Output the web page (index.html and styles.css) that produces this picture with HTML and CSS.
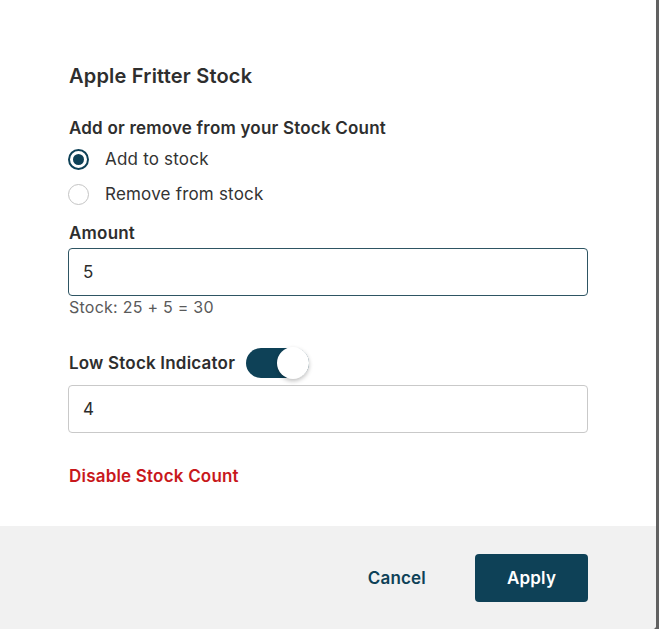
FILE: index.html
```html
<!DOCTYPE html>
<html>
<head>
<meta charset="utf-8">
<link rel="stylesheet" href="styles.css">
</head>
<body>
<div class="modal">
  <div class="content">
    <h2 class="title">Apple Fritter Stock</h2>
    <div class="group-label">Add or remove from your Stock Count</div>
    <div class="radios">
      <label class="radio"><span class="dot checked"></span><span>Add to stock</span></label>
      <label class="radio"><span class="dot"></span><span>Remove from stock</span></label>
    </div>
    <div class="field-label">Amount</div>
    <div class="input focused">5</div>
    <div class="hint">Stock: 25 + 5 = 30</div>
    <div class="toggle-row">
      <span class="field-label inline">Low Stock Indicator</span>
      <span class="toggle"><span class="knob"></span></span>
    </div>
    <div class="input">4</div>
    <div class="danger">Disable Stock Count</div>
  </div>
  <div class="footer">
    <span class="cancel">Cancel</span>
    <span class="apply">Apply</span>
  </div>
</div>
</body>
</html>
```
FILE: styles.css
```css
* { box-sizing: border-box; }
html, body { margin: 0; padding: 0; }
body {
  background: #616161;
  font-family: Inter, "Liberation Sans", sans-serif;
  color: #2b2b2b;
  width: 659px;
  height: 629px;
  overflow: hidden;
}
.modal {
  width: 656px;
  height: 629px;
  background: #fff;
  display: flex;
  flex-direction: column;
  border-bottom-right-radius: 4px;
  overflow: hidden;
}
.content {
  flex: 1;
  padding: 64px 68px 0 69px;
  display: flex;
  flex-direction: column;
}
.title {
  margin: 0;
  font-size: 20px;
  line-height: 24px;
  font-weight: 600;
  letter-spacing: 0.2px;
  color: #2e2e2e;
}
.group-label {
  margin-top: 28px;
  font-size: 17px;
  line-height: 24px;
  font-weight: 600;
  letter-spacing: 0.2px;
  color: #2e2e2e;
}
.radios {
  margin-top: 7px;
  display: flex;
  flex-direction: column;
  gap: 11px;
}
.radio {
  display: flex;
  align-items: center;
  gap: 16px;
  height: 24px;
  font-size: 17px;
  letter-spacing: 0.2px;
  color: #333;
  margin-left: -1px;
}
.dot {
  width: 21px;
  height: 21px;
  border-radius: 50%;
  border: 1.5px solid #c4c4c4;
  display: flex;
  align-items: center;
  justify-content: center;
}
.dot.checked {
  border: 2px solid #0e4157;
}
.dot.checked::after {
  content: "";
  width: 11px;
  height: 11px;
  border-radius: 50%;
  background: #0e4157;
}
.field-label {
  margin-top: 15px;
  font-size: 17px;
  line-height: 24px;
  font-weight: 600;
  letter-spacing: 0.2px;
  color: #2e2e2e;
}
.field-label.inline { margin-top: 0; }
.input {
  margin-top: 3px;
  margin-left: -1px;
  height: 48px;
  width: 520px;
  border: 1px solid #c9c9c9;
  border-radius: 4px;
  padding: 0 14px;
  display: flex;
  align-items: center;
  font-size: 17px;
  color: #2b2b2b;
}
.input.focused {
  border-color: #2e5563;
}
.hint {
  margin-top: 1px;
  font-size: 16px;
  line-height: 20px;
  letter-spacing: 0.25px;
  color: #5a5a5a;
}
.toggle-row {
  margin-top: 30px;
  display: flex;
  align-items: center;
  gap: 11px;
  height: 32px;
}
.toggle-row + .input { margin-top: 6px; }
.toggle {
  position: relative;
  width: 63px;
  height: 30px;
  border-radius: 15px;
  background: #0e4157;
}
.knob {
  position: absolute;
  right: 0;
  top: -1px;
  width: 32px;
  height: 32px;
  border-radius: 50%;
  background: #fff;
  box-shadow: 0 2px 4px rgba(0,0,0,0.25);
}
.danger {
  margin-top: 31px;
  font-size: 17px;
  line-height: 24px;
  font-weight: 600;
  letter-spacing: 0.2px;
  color: #c8181c;
}
.footer {
  height: 103px;
  background: #f1f1f1;
  display: flex;
  justify-content: flex-end;
  align-items: flex-start;
  padding: 28px 68px 0 0;
}
.cancel {
  height: 48px;
  display: flex;
  align-items: center;
  font-size: 17px;
  font-weight: 600;
  letter-spacing: 0.2px;
  color: #0e4157;
  margin-right: 49px;
}
.apply {
  width: 113px;
  height: 48px;
  background: #0e4157;
  color: #fff;
  border-radius: 4px;
  display: flex;
  align-items: center;
  justify-content: center;
  font-size: 17px;
  font-weight: 600;
  letter-spacing: 0.2px;
}
```
